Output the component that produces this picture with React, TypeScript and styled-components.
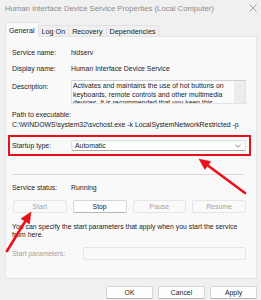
import React from "react";
import styled, { createGlobalStyle } from "styled-components";

// Page reset and base font for the dialog
const GlobalStyle = createGlobalStyle`
  html, body {
    margin: 0;
    padding: 0;
    background: #f0f0f0;
  }
  body {
    font-family: "Liberation Sans", "Noto Sans", sans-serif;
    font-size: 6.9px;
    color: #1b1b1b;
  }
`;

const Window = styled.div`
  position: relative;
  width: 261px;
  height: 300px;
  box-sizing: border-box;
  padding: 0 4px 0 5px;
  background: #f0f0f0;
  display: flex;
  flex-direction: column;
`;

const TitleBar = styled.div`
  height: 20px;
  display: flex;
  align-items: center;
  justify-content: space-between;
  padding-bottom: 4px;
  box-sizing: border-box;
  color: #8c8c8c;
  font-size: 7.7px;
`;

const CloseIcon = styled.svg`
  width: 8px;
  height: 8px;
`;

const TabRow = styled.div`
  display: flex;
  align-items: flex-end;
  height: 15px;
  margin-top: 2px;
  margin-bottom: -1px;
  position: relative;
  z-index: 1;
`;

const Tab = styled.div<{ $active?: boolean }>`
  box-sizing: border-box;
  height: ${(p) => (p.$active ? "15px" : "12px")};
  padding: 0 3px;
  display: flex;
  align-items: center;
  border: 1px solid #e3e3e3;
  border-bottom: ${(p) => (p.$active ? "none" : "1px solid #e3e3e3")};
  margin-left: ${(p) => (p.$active ? "0" : "-1px")};
  background: ${(p) => (p.$active ? "#f9f9f9" : "#f0f0f0")};
  color: #1b1b1b;
  font-size: 7.2px;
`;

const Panel = styled.div`
  box-sizing: border-box;
  height: 243px;
  background: #f9f9f9;
  border: 1px solid #e5e5e5;
  padding: 11px 10px 0 6px;
  display: flex;
  flex-direction: column;
`;

const FieldRow = styled.div<{ $gap?: number; $disabled?: boolean; $label?: number }>`
  display: grid;
  grid-template-columns: ${(p) => p.$label ?? 59}px 1fr;
  align-items: center;
  line-height: 10px;
  margin-top: ${(p) => p.$gap ?? 0}px;
  color: ${(p) => (p.$disabled ? "#a3a3a3" : "inherit")};
`;

const Highlight = styled(FieldRow)`
  border: 2px solid #e8111a;
  margin-left: -4px;
  margin-right: -5px;
  padding: 3px 3px 3px 2px;
`;

const TextBox = styled.div`
  box-sizing: border-box;
  height: 24px;
  background: #fbfbfb;
  border: 1px solid #e2e2e2;
  border-top-color: #cfcfcf;
  display: flex;
  overflow: hidden;
  align-self: start;
`;

const TextBody = styled.div`
  flex: 1;
  padding: 1px 2px 0 1px;
  line-height: 8.6px;
  white-space: nowrap;
  overflow: hidden;
`;

const ScrollTrack = styled.div`
  width: 11px;
  background: #ececec;
`;

const LabelTop = styled.div`
  align-self: start;
  padding-top: 2px;
`;

const Block = styled.div<{ $gap?: number }>`
  line-height: 10px;
  margin-top: ${(p) => p.$gap ?? 0}px;
  white-space: nowrap;
`;

const Select = styled.div`
  box-sizing: border-box;
  height: 11px;
  background: #fdfdfd;
  border: 1px solid #e0e0e0;
  border-bottom-color: #a9a9a9;
  border-radius: 2px;
  display: flex;
  align-items: center;
  justify-content: space-between;
  padding: 0 4px 0 3px;
`;

const Separator = styled.hr`
  border: none;
  border-top: 1px solid #dadada;
  margin: 18px 2px 0 0;
  height: 0;
`;

const ButtonGrid = styled.div`
  display: grid;
  grid-template-columns: repeat(4, 1fr);
  gap: 6px;
  margin-top: 7px;
  padding-left: 1px;
`;

const Button = styled.div<{ $disabled?: boolean }>`
  box-sizing: border-box;
  height: 13px;
  display: flex;
  align-items: center;
  justify-content: center;
  border-radius: 2px;
  background: ${(p) => (p.$disabled ? "#f9f9f9" : "#fdfdfd")};
  border: 1px solid ${(p) => (p.$disabled ? "#e6e6e6" : "#d5d5d5")};
  border-bottom-color: ${(p) => (p.$disabled ? "#e6e6e6" : "#b5b5b5")};
  color: ${(p) => (p.$disabled ? "#a3a3a3" : "#1b1b1b")};
`;

const Note = styled.p`
  margin: 10px 0 0 0;
  line-height: 8px;
  white-space: nowrap;
`;

const ParamInput = styled.div`
  box-sizing: border-box;
  height: 13px;
  border: 1px solid #e6e6e6;
  border-radius: 2px;
  background: #f9f9f9;
`;

const Footer = styled.div`
  display: flex;
  justify-content: flex-end;
  gap: 5px;
  margin-top: 7px;
`;

const FooterButton = styled(Button)`
  width: 47px;
`;

const Annotations = styled.svg`
  position: absolute;
  left: 0;
  top: 0;
  pointer-events: none;
`;

// Red annotation arrow drawn from tail to tip
const Arrow: React.FC<{ x1: number; y1: number; x2: number; y2: number }> = ({ x1, y1, x2, y2 }) => {
  const ang = Math.atan2(y2 - y1, x2 - x1);
  const len = 11;
  const wide = 5;
  const bx = x2 - Math.cos(ang) * len;
  const by = y2 - Math.sin(ang) * len;
  const px = -Math.sin(ang) * wide;
  const py = Math.cos(ang) * wide;
  return (
    <g fill="#e8111a" stroke="#e8111a">
      <line x1={x1} y1={y1} x2={bx} y2={by} strokeWidth={2.6} strokeLinecap="round" />
      <polygon points={`${x2},${y2} ${bx + px},${by + py} ${bx - px},${by - py}`} strokeWidth={0.5} />
    </g>
  );
};

const App: React.FC = () => {
  return (
    <Window>
      <GlobalStyle />
      <TitleBar>
        <span>Human Interface Device Service Properties (Local Computer)</span>
        <CloseIcon viewBox="0 0 8 8">
          <path d="M0.5 0.5 L7.5 7.5 M7.5 0.5 L0.5 7.5" stroke="#8c8c8c" strokeWidth="0.8" />
        </CloseIcon>
      </TitleBar>

      <TabRow>
        <Tab $active>General</Tab>
        <Tab>Log On</Tab>
        <Tab>Recovery</Tab>
        <Tab>Dependencies</Tab>
      </TabRow>

      <Panel>
        <FieldRow>
          <span>Service name:</span>
          <span>hidserv</span>
        </FieldRow>
        <FieldRow $gap={6}>
          <span>Display name:</span>
          <span>Human Interface Device Service</span>
        </FieldRow>
        <FieldRow $gap={6}>
          <LabelTop>Description:</LabelTop>
          <TextBox>
            <TextBody>
              Activates and maintains the use of hot buttons on
              <br />
              keyboards, remote controls and other multimedia
              <br />
              devices. It is recommended that you keep this
            </TextBody>
            <ScrollTrack />
          </TextBox>
        </FieldRow>

        <Block $gap={6}>Path to executable:</Block>
        <Block>C:\WINDOWS\system32\svchost.exe -k LocalSystemNetworkRestricted -p</Block>

        <Highlight $gap={5}>
          <span>Startup type:</span>
          <Select>
            <span>Automatic</span>
            <svg width="6" height="4" viewBox="0 0 6 4">
              <path d="M0.5 0.8 L3 3.2 L5.5 0.8" fill="none" stroke="#555" strokeWidth="0.7" />
            </svg>
          </Select>
        </Highlight>

        <Separator />

        <FieldRow $gap={8}>
          <span>Service status:</span>
          <span>Running</span>
        </FieldRow>

        <ButtonGrid>
          <Button $disabled>Start</Button>
          <Button>Stop</Button>
          <Button $disabled>Pause</Button>
          <Button $disabled>Resume</Button>
        </ButtonGrid>

        <Note>
          You can specify the start parameters that apply when you start the service
          <br />
          from here.
        </Note>

        <FieldRow $gap={8} $disabled $label={71}>
          <span>Start parameters:</span>
          <ParamInput />
        </FieldRow>
      </Panel>

      <Footer>
        <FooterButton>OK</FooterButton>
        <FooterButton>Cancel</FooterButton>
        <FooterButton>Apply</FooterButton>
      </Footer>

      <Annotations width="261" height="300" viewBox="0 0 261 300">
        <Arrow x1={245} y1={193} x2={199} y2={159} />
        <Arrow x1={7} y1={251} x2={31} y2={212} />
      </Annotations>
    </Window>
  );
};

export default App;
